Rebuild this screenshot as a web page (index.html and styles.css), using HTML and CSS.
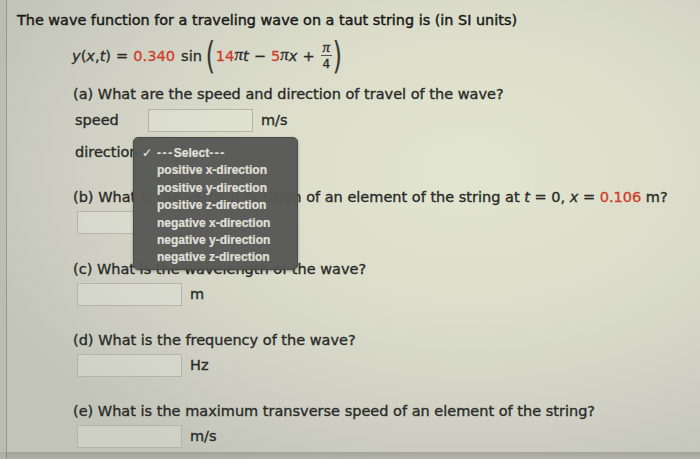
FILE: index.html
```html
<!DOCTYPE html>
<html>
<head>
<meta charset="utf-8">
<link rel="stylesheet" href="styles.css">
</head>
<body>
<div class="screen">
  <div class="page">
    <div class="title">The wave function for a traveling wave on a taut string is (in SI units)</div>
    <div class="eq"><span class="it">y</span><span>(</span><span class="it">x</span><span>,</span><span class="it">t</span><span>)</span><span class="op">=</span><span class="red">0.340</span><span class="fn">sin</span><span class="paren">(</span><span class="red">14</span><span class="pi">π</span><span class="it">t</span><span class="op">−</span><span class="red">5</span><span class="pi">π</span><span class="it">x</span><span class="op">+</span><span class="frac"><span class="num pi">π</span><span class="den">4</span></span><span class="paren">)</span></div>
    <div class="parts">
      <div class="q first">(a) What are the speed and direction of travel of the wave?</div>
      <div class="row speed">
        <span class="label">speed</span><span class="box"></span><span class="unit">m/s</span>
      </div>
      <div class="row dir">
        <span class="label">direction</span>
        <div class="menu">
          <div class="item checked"><span class="check">✓</span><span class="dash">---</span>Select<span class="dash">---</span></div>
          <div class="item">positive x-direction</div>
          <div class="item">positive y-direction</div>
          <div class="item">positive z-direction</div>
          <div class="item">negative x-direction</div>
          <div class="item">negative y-direction</div>
          <div class="item">negative z-direction</div>
        </div>
      </div>
      <div class="q b">(b) What is the vertical position of an element of the string at <span class="it">t</span> = 0, <span class="it">x</span> = <span class="red">0.106</span> m?</div>
      <div class="row ans"><span class="box"></span><span class="unit">m</span></div>
      <div class="q c">(c) What is the wavelength of the wave?</div>
      <div class="row ans"><span class="box"></span><span class="unit">m</span></div>
      <div class="q">(d) What is the frequency of the wave?</div>
      <div class="row ans"><span class="box"></span><span class="unit">Hz</span></div>
      <div class="q">(e) What is the maximum transverse speed of an element of the string?</div>
      <div class="row ans"><span class="box"></span><span class="unit">m/s</span></div>
    </div>
  </div>
</div>
</body>
</html>
```

FILE: styles.css
```css
html, body {
  margin: 0;
  padding: 0;
  width: 700px;
  height: 459px;
  overflow: hidden;
}
body {
  background: #c8c9bd;
  font-family: "DejaVu Sans", Verdana, sans-serif;
  color: #2a2b29;
}
.screen {
  width: 700px;
  height: 459px;
  background:
    linear-gradient(90deg, rgba(180,182,170,0.55) 0px, rgba(180,182,170,0.55) 6px, rgba(120,120,112,0.6) 6px, rgba(120,120,112,0.6) 7px, rgba(0,0,0,0) 7px),
    linear-gradient(180deg, rgba(0,0,0,0) 452px, rgba(140,140,130,0.6) 452px, rgba(150,150,140,0.4) 459px),
    radial-gradient(ellipse 520px 340px at 470px 170px, #e2e5cf 0%, #dbddca 45%, #cfd0c3 75%, #c3c4b9 100%);
}
.page {
  padding: 10px 0 0 17px;
  position: relative;
}
.title {
  font-size: 14.4px;
  line-height: 20px;
  height: 20px;
  color: #1a1b19;
  -webkit-text-stroke: 0.45px #1a1b19;
  white-space: nowrap;
}
.eq {
  margin: 7px 0 0 55px;
  height: 36px;
  display: flex;
  align-items: center;
  font-size: 14.6px;
  white-space: nowrap;
  -webkit-text-stroke: 0.3px currentColor;
}
.it { font-style: italic; }
.red { color: #cf3d2c; }
.op { margin: 0 5px; }
.fn { margin-left: 6px; margin-right: 3px; }
.pi {
  font-family: "Liberation Serif", serif;
  font-style: italic;
  font-size: 17px;
}
.paren {
  font-size: 38px;
  font-weight: normal;
  line-height: 36px;
  color: #3a3b38;
  -webkit-text-stroke: 0;
  transform: scaleX(0.65);
  margin: 0 -2px;
  font-family: "DejaVu Sans", sans-serif;
}
.frac {
  display: inline-flex;
  flex-direction: column;
  align-items: center;
  font-size: 12px;
  line-height: 16px;
  margin-left: 1px;
}
.frac .num {
  font-size: 15px;
  border-bottom: 1px solid #555;
  padding: 0 2px;
  line-height: 16px;
}
.parts {
  padding-left: 56px;
  font-size: 14.5px;
  -webkit-text-stroke: 0.35px currentColor;
}
.q {
  line-height: 20px;
  height: 20px;
  margin-top: 25px;
  white-space: nowrap;
}
.q.first { margin-top: 11px; }
.q.b { margin-top: 24px; }
.q.c { margin-top: 26px; }
.row {
  display: flex;
  align-items: center;
  height: 22px;
}
.row.speed { margin-top: 5px; }
.row.dir { margin-top: 10px; position: relative; }
.row.ans { margin-top: 4px; padding-left: 4px; }
.label {
  width: 73px;
  padding-left: 2px;
}
.box {
  display: block;
  width: 103px;
  height: 21px;
  border: 1px solid #b3b4aa;
  background: rgba(240,242,232,0.25);
}
.unit {
  margin-left: 8px;
}
.menu {
  position: absolute;
  left: 60px;
  top: -4px;
  width: 165px;
  height: 133px;
  box-sizing: border-box;
  padding: 7px 0 0 0;
  background: rgba(88,89,86,0.97);
  border: 1px solid #4a4b48;
  border-radius: 5px;
  box-shadow: 0 1px 3px rgba(0,0,0,0.3);
  font-family: "Liberation Sans", Arial, sans-serif;
  font-size: 12px;
  font-weight: bold;
  color: #e0e0da;
  -webkit-text-stroke: 0.2px #e0e0da;
}
.item {
  height: 17.4px;
  line-height: 17.4px;
  padding-left: 23px;
  position: relative;
  white-space: nowrap;
}
.dash {
  letter-spacing: 1.6px;
}
.check {
  position: absolute;
  left: 8px;
  top: 0;
  font-family: "DejaVu Sans", sans-serif;
  font-weight: normal;
  font-size: 12px;
}
```
